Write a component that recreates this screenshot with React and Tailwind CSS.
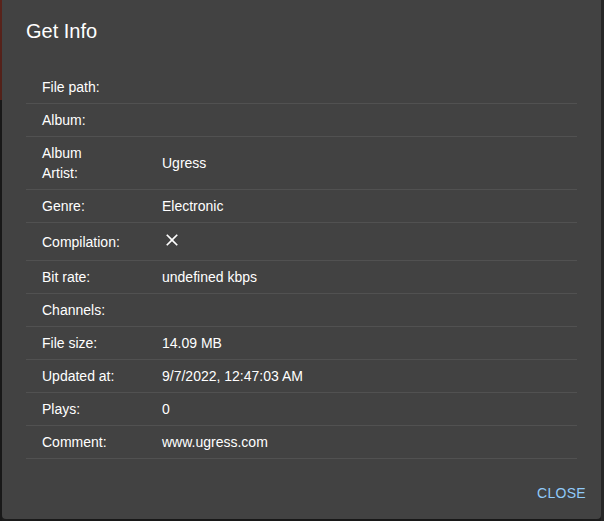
import React from 'react';

const rows = [
  { label: 'File path:', value: '' },
  { label: 'Album:', value: '' },
  { label: <>Album<br />Artist:</>, value: 'Ugress' },
  { label: 'Genre:', value: 'Electronic' },
  { label: 'Compilation:', value: 'x', icon: true },
  { label: 'Bit rate:', value: 'undefined kbps' },
  { label: 'Channels:', value: '' },
  { label: 'File size:', value: '14.09 MB' },
  { label: 'Updated at:', value: '9/7/2022, 12:47:03 AM' },
  { label: 'Plays:', value: '0' },
  { label: 'Comment:', value: 'www.ugress.com' },
];

const CloseIcon = () => (
  <svg viewBox="0 0 24 24" className="w-5 h-5 fill-white mt-px">
    <path d="M19 6.41 17.59 5 12 10.59 6.41 5 5 6.41 10.59 12 5 17.59 6.41 19 12 13.41 17.59 19 19 17.59 13.41 12z" />
  </svg>
);

const App = () => {
  return (
    <div
      className="w-[604px] h-[521px] bg-[#1e1e1e] flex overflow-hidden"
      style={{ fontFamily: '"Liberation Sans", Arial, sans-serif' }}
    >
      {/* sliver of the page behind the overlay */}
      <div className="w-[2px] shrink-0 flex flex-col">
        <div className="h-[100px] bg-[#5a241c]"></div>
        <div className="flex-1 bg-[#1b1b1b]"></div>
      </div>

      <div className="w-[599px] h-[519px] bg-[#424242] rounded-b flex flex-col text-white shadow-2xl">
        <h2 className="px-6 pt-[15px] pb-[24px] text-xl leading-8 font-normal">Get Info</h2>

        <div className="px-6 pb-2 flex-1">
          {rows.map((row, i) => (
            <div
              key={i}
              className="flex items-center px-4 py-[6px] border-b border-[#515151] text-sm leading-5"
            >
              <div className="w-[120px] shrink-0">{row.label}</div>
              {row.icon ? (
                <div className="h-[25px] flex items-start">
                  <CloseIcon />
                </div>
              ) : (
                <div>{row.value}</div>
              )}
            </div>
          ))}
        </div>

        <div className="flex justify-end p-2">
          <button className="pl-2 pr-[7px] py-1.5 text-sm leading-[1.75] font-medium uppercase tracking-[0.3px] text-[#90caf9] rounded">
            Close
          </button>
        </div>
      </div>

      <div className="flex-1 bg-[#262626]"></div>
    </div>
  );
};

export default App;
